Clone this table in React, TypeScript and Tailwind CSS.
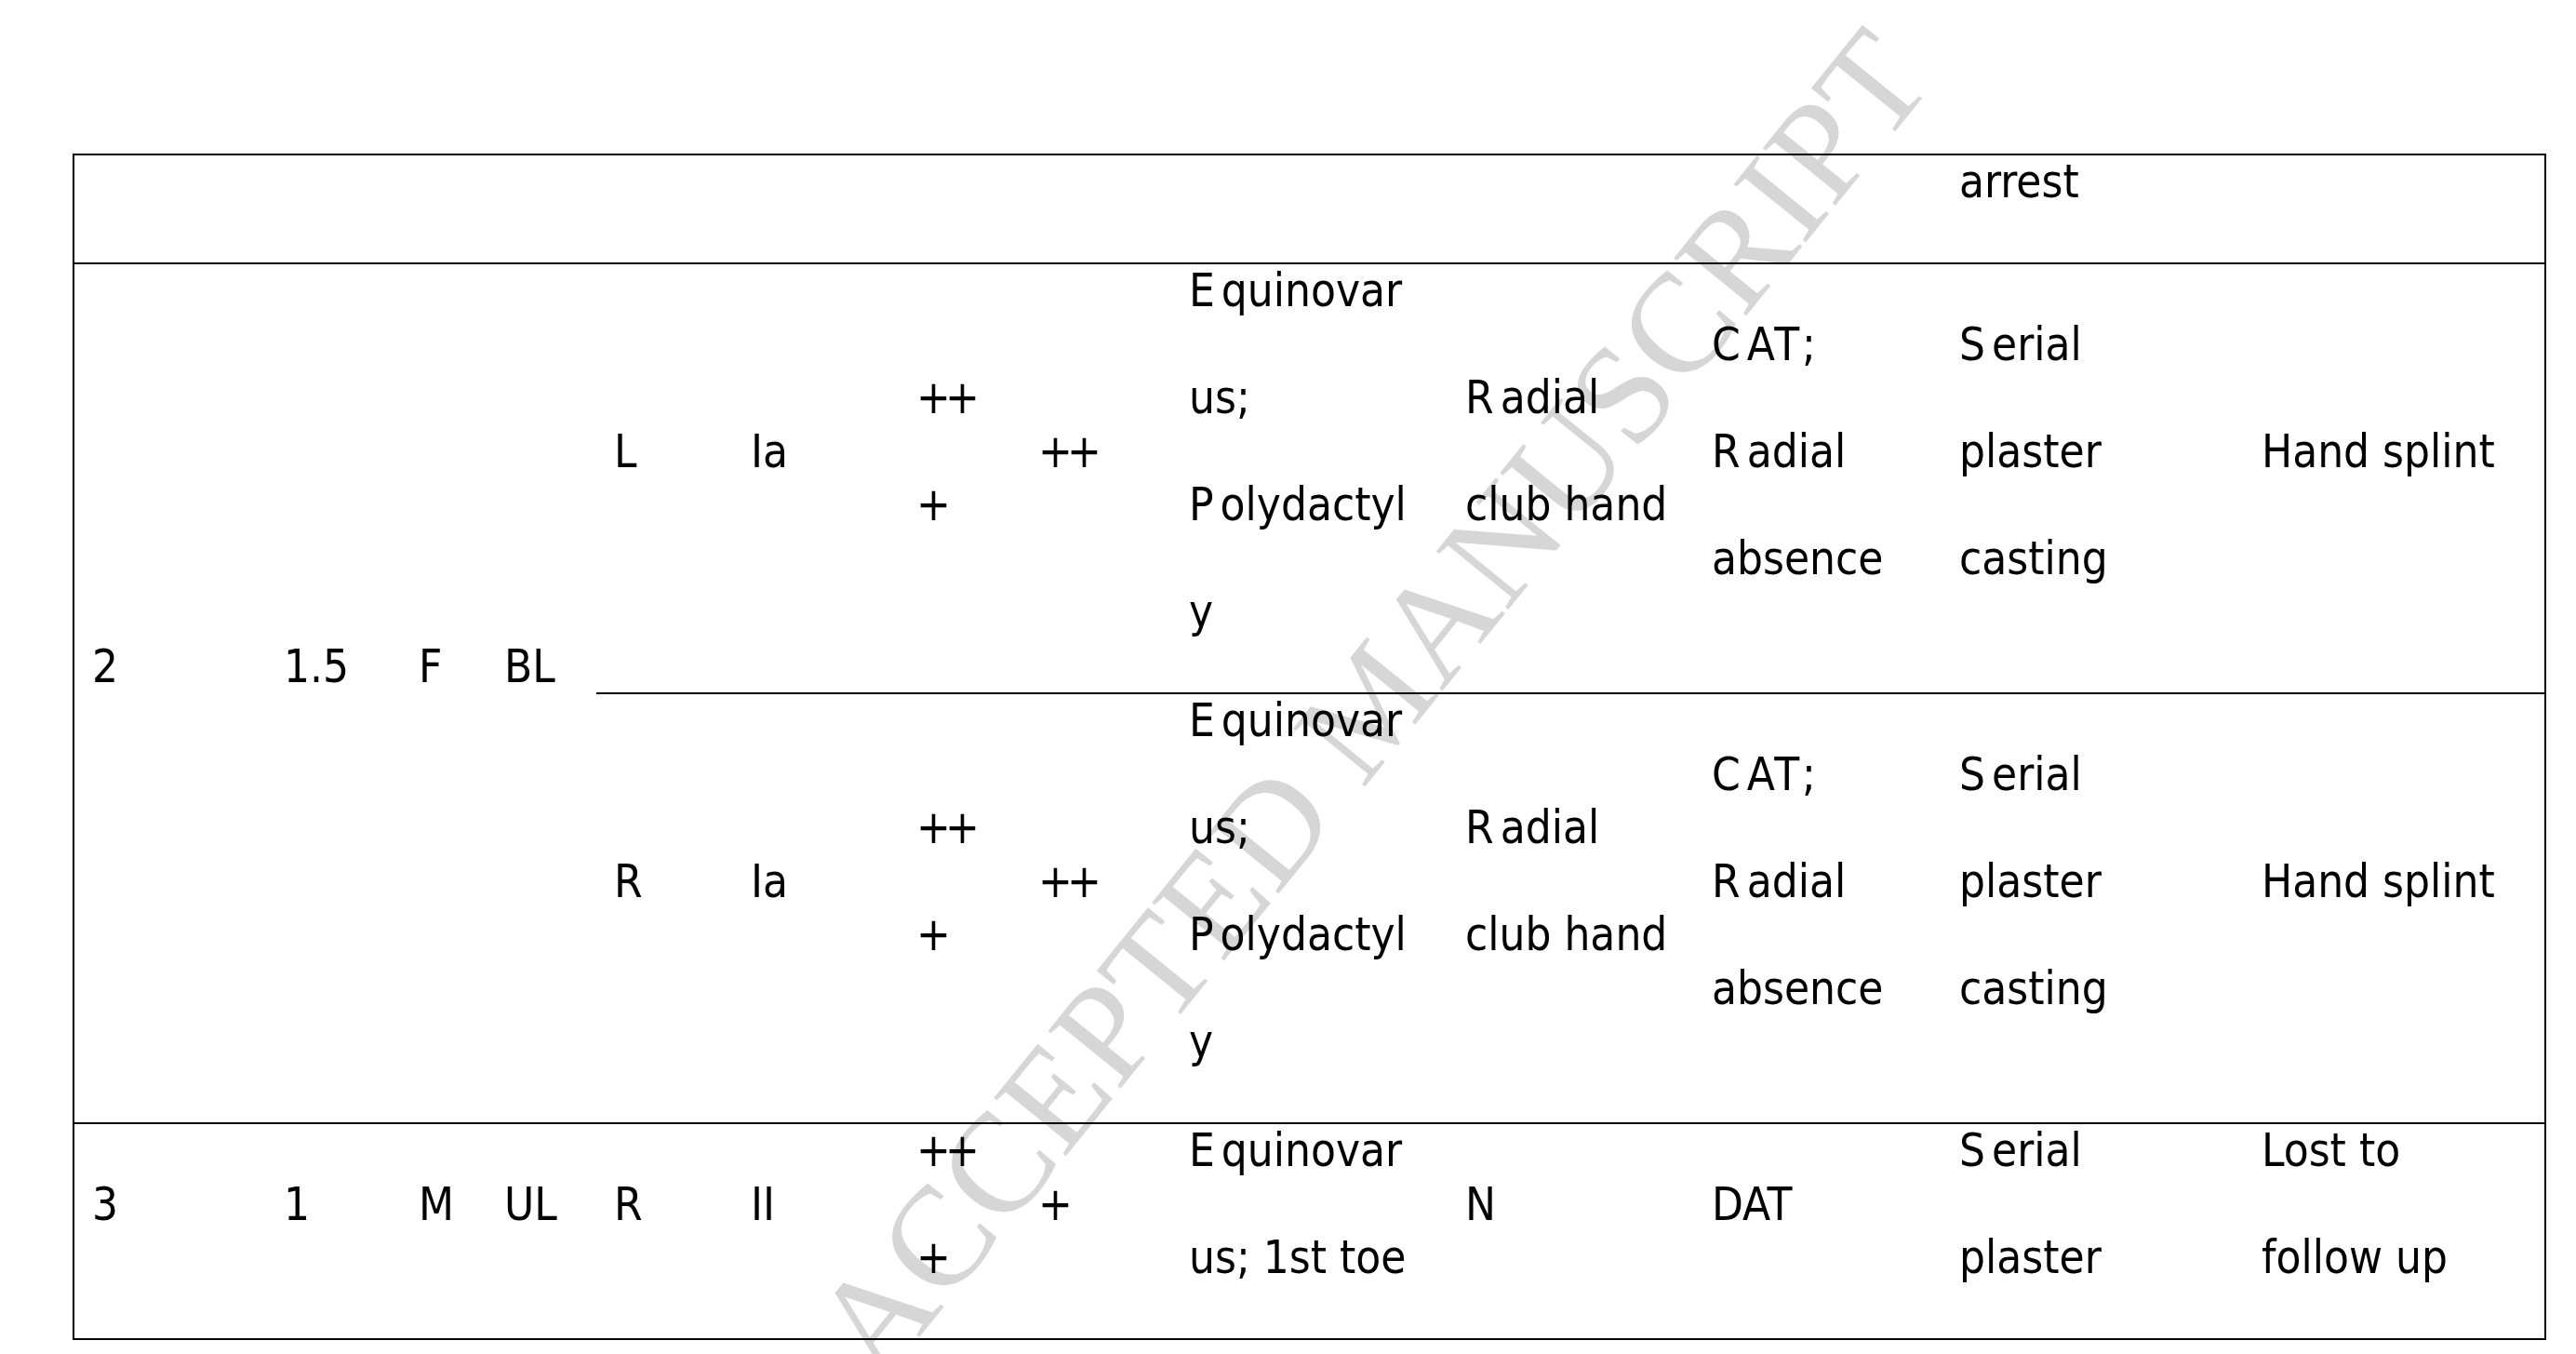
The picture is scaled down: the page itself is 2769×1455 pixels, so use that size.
import type React from "react";

type Line = React.ReactNode;

// first capital of a word sits a little apart from the rest in the source
const Cap = ({ c, rest }: { c: string; rest: string }) => (
  <>
    <span className="mr-[7px]">{c}</span>
    {rest}
  </>
);

const Plus = ({ n }: { n: string }) => <span className="tracking-[-6px]">{n}</span>;

const Cell = ({ lines = [] }: { lines?: Line[] }) => (
  <div className="flex flex-col justify-center gap-[57px] pb-[57px] pl-[19px]">
    {lines.map((l, i) => (
      <div key={i} className="h-[58px] leading-[58px] whitespace-nowrap">
        {l}
      </div>
    ))}
  </div>
);

const FULL_COLS =
  "grid grid-cols-[206px_145px_92px_118px_147px_178px_131px_162px_297px_265px_266px_325px_323px]";
const LEFT_COLS = "grid grid-cols-[206px_145px_92px_118px]";
const RIGHT_COLS = "grid grid-cols-[147px_178px_131px_162px_297px_265px_266px_325px_323px]";

const cat = (
  <>
    <span className="mr-[7px]">C</span>
    <span className="tracking-[3px]">AT;</span>
  </>
);

const sideRow = (side: string): Line[][] => [
  [side],
  ["Ia"],
  [<Plus key="a" n="++" />, "+"],
  [<Plus key="b" n="++" />],
  [<Cap key="e" c="E" rest="quinovar" />, "us;", <Cap key="p" c="P" rest="olydactyl" />, "y"],
  [<Cap key="r" c="R" rest="adial" />, "club hand"],
  [cat, <Cap key="r" c="R" rest="adial" />, "absence"],
  [<Cap key="s" c="S" rest="erial" />, "plaster", "casting"],
  ["Hand splint"],
];

const lastRow: Line[][] = [
  ["3"],
  ["1"],
  ["M"],
  ["UL"],
  ["R"],
  ["II"],
  [<Plus key="a" n="++" />, "+"],
  ["+"],
  [<Cap key="e" c="E" rest="quinovar" />, "us; 1st toe"],
  ["N"],
  ["DAT"],
  [<Cap key="s" c="S" rest="erial" />, "plaster"],
  ["Lost to", "follow up"],
];

export default function App() {
  return (
    <div className="relative isolate min-h-[1455px] w-[2769px] overflow-hidden bg-white pl-[78px] pt-[165px] text-[49px] text-black font-['DejaVu_Sans_Condensed','DejaVu_Sans',sans-serif] [font-stretch:condensed]">
      <div className="pointer-events-none absolute left-[1474px] top-[756px] z-0 -translate-x-1/2 -translate-y-1/2 rotate-[-51deg] select-none whitespace-nowrap font-['Liberation_Serif','Times_New_Roman',serif] text-[152px] leading-none text-[#d6d6d6] [font-stretch:normal]">
        ACCEPTED MANUSCRIPT
      </div>

      <div className="relative z-10 w-[2659px] border-2 border-black">
        {/* tail of the row carried over from the previous page */}
        <div className={FULL_COLS}>
          {Array.from({ length: 13 }, (_, i) => (
            <Cell key={i} lines={i === 11 ? ["arrest"] : []} />
          ))}
        </div>

        <div className="flex border-t-2 border-black">
          <div className={LEFT_COLS}>
            <Cell lines={["2"]} />
            <Cell lines={["1.5"]} />
            <Cell lines={["F"]} />
            <Cell lines={["BL"]} />
          </div>
          <div className="flex flex-col">
            <div className={RIGHT_COLS}>
              {sideRow("L").map((lines, i) => (
                <Cell key={i} lines={lines} />
              ))}
            </div>
            <div className={`${RIGHT_COLS} border-t-2 border-black`}>
              {sideRow("R").map((lines, i) => (
                <Cell key={i} lines={lines} />
              ))}
            </div>
          </div>
        </div>

        <div className={`${FULL_COLS} border-t-2 border-black`}>
          {lastRow.map((lines, i) => (
            <Cell key={i} lines={lines} />
          ))}
        </div>
      </div>
    </div>
  );
}
